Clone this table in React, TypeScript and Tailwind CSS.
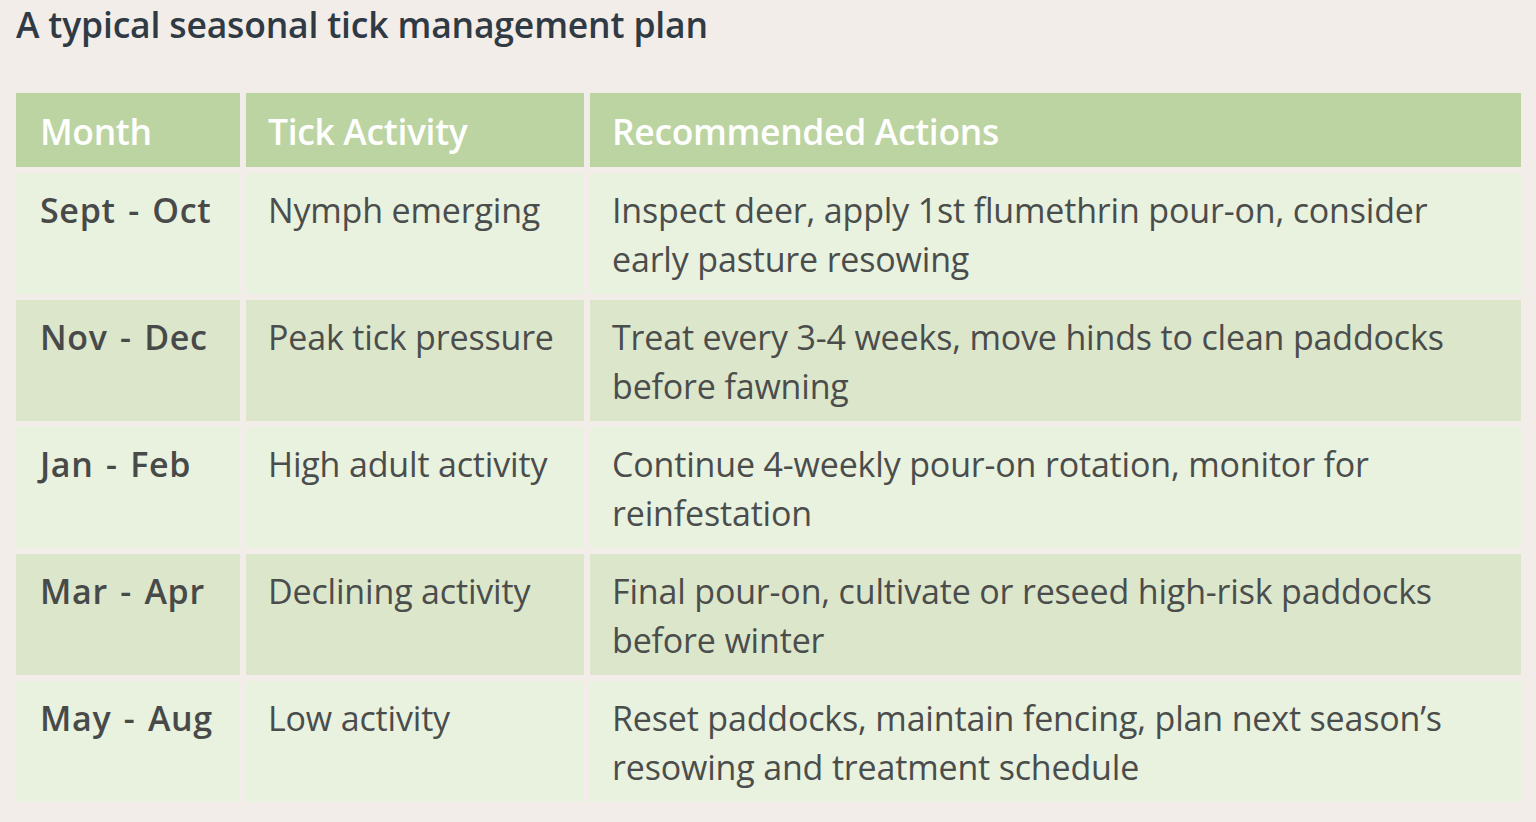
const rows = [
  {
    month: "Sept - Oct",
    activity: "Nymph emerging",
    actions: "Inspect deer, apply 1st flumethrin pour-on, consider early pasture resowing",
  },
  {
    month: "Nov - Dec",
    activity: "Peak tick pressure",
    actions: "Treat every 3-4 weeks, move hinds to clean paddocks before fawning",
  },
  {
    month: "Jan - Feb",
    activity: "High adult activity",
    actions: "Continue 4-weekly pour-on rotation, monitor for reinfestation",
  },
  {
    month: "Mar - Apr",
    activity: "Declining activity",
    actions: "Final pour-on, cultivate or reseed high-risk paddocks before winter",
  },
  {
    month: "May - Aug",
    activity: "Low activity",
    actions: "Reset paddocks, maintain fencing, plan next season\u2019s resowing and treatment schedule",
  },
];

export default function App() {
  return (
    <div className="min-h-screen bg-[#f2ede9] px-4 font-['Open_Sans','Liberation_Sans',sans-serif]">
      <h1 className="text-[35.5px] font-semibold leading-[48px] tracking-[-0.005em] text-[#2f3a44]">
        A typical seasonal tick management plan
      </h1>

      <div className="mt-[45px] grid w-[1505px] grid-cols-[224px_338px_931px] gap-[6px]">
        <div className="h-[74px] bg-[#bcd4a2] pl-6 pt-[13px] text-[35.5px] font-semibold leading-[50px] tracking-[-0.01em] text-white">
          Month
        </div>
        <div className="h-[74px] bg-[#bcd4a2] pl-[22px] pt-[13px] text-[35.5px] font-semibold leading-[50px] tracking-[-0.01em] text-white">
          Tick Activity
        </div>
        <div className="h-[74px] bg-[#bcd4a2] pl-[22px] pt-[13px] text-[35.5px] font-semibold leading-[50px] tracking-[-0.01em] text-white">
          Recommended Actions
        </div>

        {rows.map((r, i) => {
          const bg = i % 2 === 0 ? "bg-[#e9f1df]" : "bg-[#dce6cb]";
          return [
            <div
              key={r.month + "-m"}
              className={`${bg} h-[121px] pl-6 pt-[13px] text-[34px] font-semibold leading-[49px] tracking-[0.02em] text-[#474a48] [word-spacing:3px]`}
            >
              {r.month}
            </div>,
            <div
              key={r.month + "-a"}
              className={`${bg} h-[121px] pl-[22px] pt-[13px] text-[34px] leading-[49px] tracking-[-0.005em] text-[#4a4d4b]`}
            >
              {r.activity}
            </div>,
            <div
              key={r.month + "-r"}
              className={`${bg} h-[121px] pl-[22px] pr-10 pt-[13px] text-[34px] leading-[49px] tracking-[-0.005em] text-[#4a4d4b]`}
            >
              {r.actions}
            </div>,
          ];
        })}
      </div>
    </div>
  );
}
